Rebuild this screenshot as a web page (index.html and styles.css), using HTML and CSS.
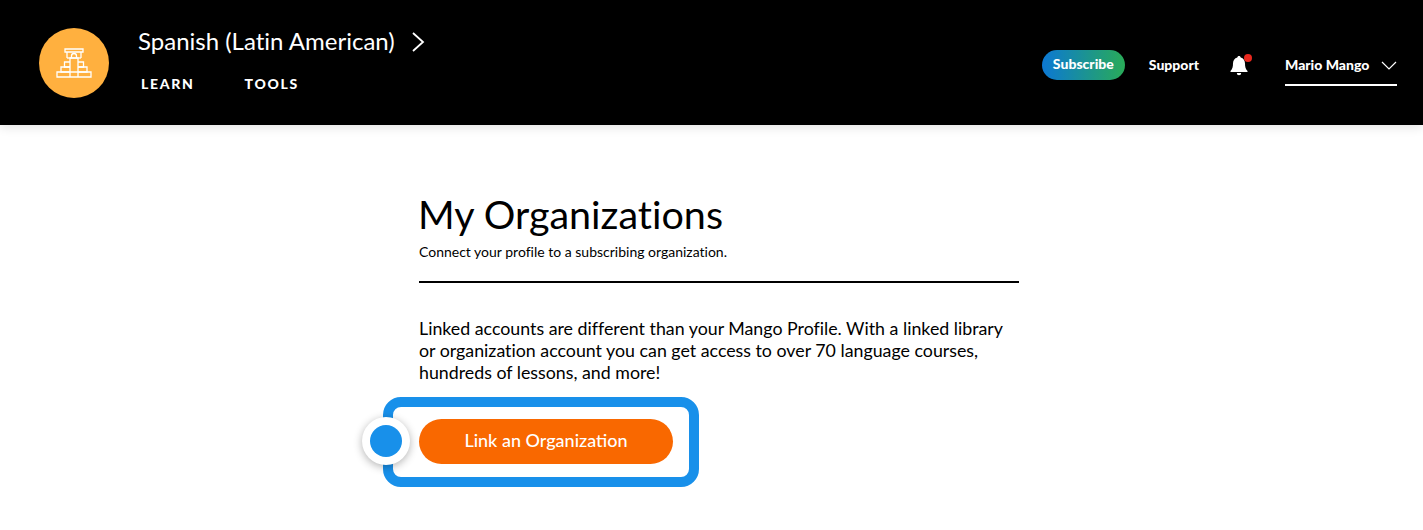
FILE: index.html
```html
<!DOCTYPE html>
<html lang="en">
<head>
  <meta charset="utf-8">
  <title>My Organizations</title>
  <link rel="stylesheet" href="styles.css">
</head>
<body>
  <header class="topbar">
    <div class="course-logo">
      <svg width="36" height="30" viewBox="0 0 36 30" fill="none" stroke="#fff" stroke-width="1.3">
        <path d="M9 1h18v3H9z"/>
        <path d="M11 4v6M25 4v6"/>
        <path d="M14 29V10h8v19"/>
        <path d="M15.500 10V8a2.500 2.500 0 0 1 5 0v2"/>
        <path d="M11 10h14"/>
        <path d="M14 14H8.500v5H14M22 14h5.500v5H22"/>
        <path d="M14 19H5v5h9M22 19h9v5h-9"/>
        <path d="M1 24h34v5H1z"/>
      </svg>
    </div>
    <div class="course-info">
      <div class="course-title">
        <span>Spanish (Latin American)</span>
        <svg width="14" height="20" viewBox="0 0 14 20" fill="none" stroke="#fff" stroke-width="1.800">
          <path d="M2 1l10 9-10 9"/>
        </svg>
      </div>
      <nav class="course-nav">
        <a>LEARN</a>
        <a>TOOLS</a>
      </nav>
    </div>
    <div class="account">
      <a class="subscribe">Subscribe</a>
      <a class="support">Support</a>
      <div class="bell">
        <svg width="18" height="21" viewBox="0 0 18 21" fill="#fff">
          <path d="M9 1c1 0 1.600.7 1.700 1.500C13.500 3.300 15 5.500 15 8.500c0 3.500.6 5.500 2.500 7.500v1H.5v-1C2.400 14 3 12 3 8.500c0-3 1.500-5.200 4.300-6C7.400 1.700 8 1 9 1z"/>
          <path d="M6.800 18h4.400a2.200 2.200 0 0 1-4.400 0z"/>
        </svg>
        <span class="bell-dot"></span>
      </div>
      <div class="user-menu">
        <span>Mario Mango</span>
        <svg width="16" height="9" viewBox="0 0 16 9" fill="none" stroke="#fff" stroke-width="1.200">
          <path d="M1 1l7 7 7-7"/>
        </svg>
      </div>
    </div>
  </header>

  <main class="content">
    <h1>My Organizations</h1>
    <p class="subtitle">Connect your profile to a subscribing organization.</p>
    <hr class="divider">
    <p class="intro">Linked accounts are different than your Mango Profile. With a linked library or organization account you can get access to over 70 language courses, hundreds of lessons, and more!</p>
    <div class="link-wrap">
      <button class="link-btn">Link an Organization</button>
      <div class="highlight"></div>
      <div class="hotspot"><span></span></div>
    </div>
  </main>
</body>
</html>
```

FILE: styles.css
```css
body {
  margin: 0;
  height: 530px;
  overflow: hidden;
  background: #fff;
  color: #000;
  font-family: "Lato", "Liberation Sans", sans-serif;
  font-variant-ligatures: none;
}

.topbar {
  display: flex;
  align-items: flex-start;
  height: 125px;
  background: #000;
  color: #fff;
  box-shadow: 0 2px 10px rgba(0, 0, 0, 0.12);
}

.course-logo {
  display: flex;
  justify-content: center;
  align-items: center;
  width: 70px;
  height: 70px;
  margin: 28px 0 0 39px;
  border-radius: 50%;
  background: #ffb03f;
}

.course-info {
  margin: 27px 0 0 29px;
}

.course-title {
  display: flex;
  align-items: center;
  gap: 16px;
  height: 30px;
  font-size: 24px;
}

.course-title span {
  padding-bottom: 4px;
}

.course-nav {
  display: flex;
  gap: 50px;
  margin: 18px 0 0 3px;
  font-size: 14px;
  font-weight: 900;
  letter-spacing: 1.700px;
}

.account {
  display: flex;
  align-items: flex-start;
  margin-left: auto;
  padding: 50px 26px 0 0;
  font-size: 14px;
  font-weight: 900;
}

.subscribe {
  width: 83px;
  height: 30px;
  line-height: 28px;
  text-align: center;
  border-radius: 15px;
  background: linear-gradient(90deg, #0c78d4, #29ab58);
}

.support {
  margin-left: 24px;
  line-height: 29px;
}

.bell {
  position: relative;
  width: 18px;
  height: 21px;
  margin: 5px 0 0 31px;
}

.bell-dot {
  position: absolute;
  top: -1px;
  right: -4px;
  width: 8px;
  height: 8px;
  border-radius: 50%;
  background: #e8281e;
}

.user-menu {
  display: flex;
  align-items: center;
  justify-content: space-between;
  width: 112px;
  height: 30px;
  margin-left: 37px;
  padding-bottom: 4px;
  border-bottom: 2px solid #fff;
}

.user-menu span {
  padding-bottom: 2px;
}

.content {
  width: 600px;
  margin: 0 0 0 419px;
  padding-top: 65px;
}

h1 {
  margin: 0 0 0 -1px;
  font-size: 39.500px;
  font-weight: 400;
  line-height: 48px;
}

.subtitle {
  margin: 5px 0 0;
  font-size: 14px;
  line-height: 18px;
}

.divider {
  height: 2px;
  margin: 20px 0 0;
  border: 0;
  background: #000;
}

.intro {
  width: 590px;
  margin: 34px 0 0;
  font-size: 17.800px;
  line-height: 22px;
}

.link-wrap {
  position: relative;
  margin-top: 36px;
}

.link-btn {
  display: block;
  width: 254px;
  height: 45px;
  padding: 0 0 4px;
  border: 0;
  border-radius: 23px;
  background: #f96800;
  color: #fff;
  font-family: inherit;
  font-size: 18px;
  font-weight: 500;
}

.highlight {
  position: absolute;
  top: -22px;
  left: -36px;
  width: 296px;
  height: 70px;
  border: 10px solid #1890ea;
  border-radius: 18px;
}

.hotspot {
  position: absolute;
  top: -2px;
  left: -57px;
  display: flex;
  justify-content: center;
  align-items: center;
  width: 48px;
  height: 48px;
  border-radius: 50%;
  background: #fff;
  box-shadow: 0 2px 8px rgba(0, 0, 0, 0.3);
}

.hotspot span {
  width: 32px;
  height: 32px;
  border-radius: 50%;
  background: #1890ea;
}
```
